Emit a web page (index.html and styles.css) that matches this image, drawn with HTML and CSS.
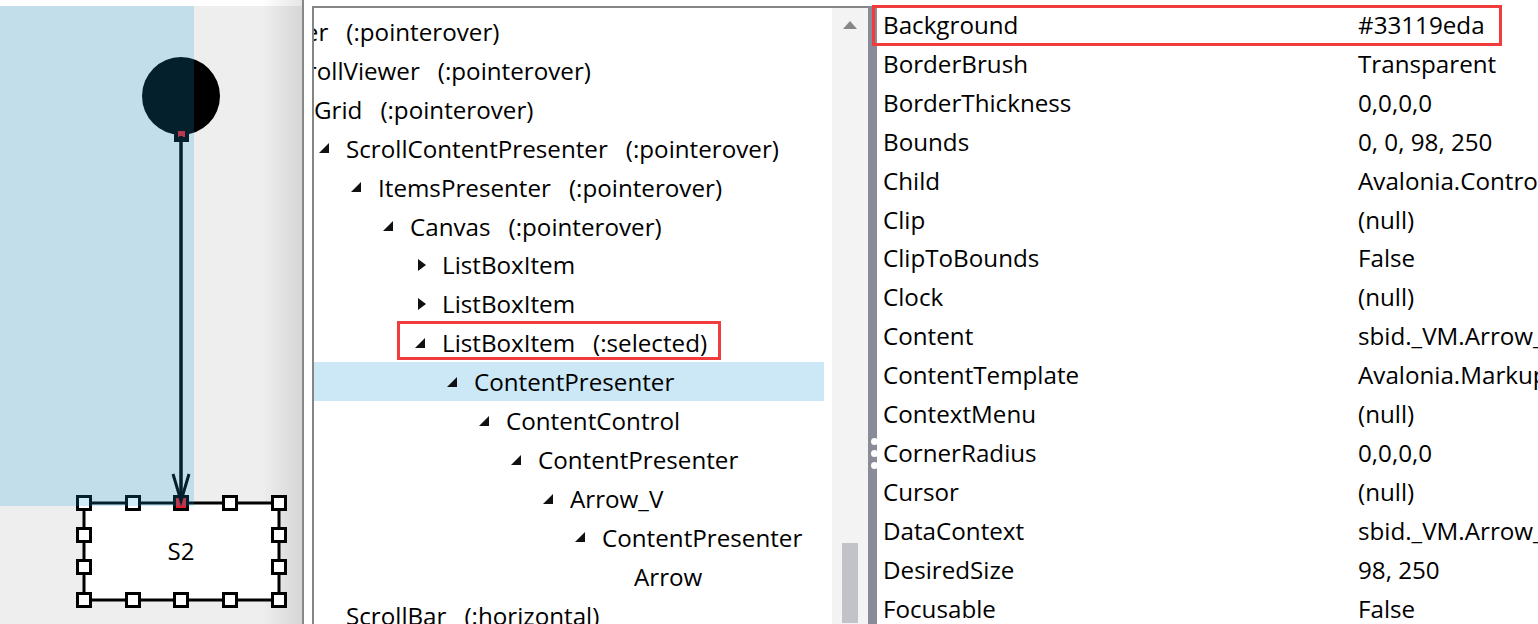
FILE: index.html
```html
<!DOCTYPE html>
<html>
<head>
<meta charset="utf-8">
<title>DevTools</title>
<link rel="stylesheet" href="styles.css">
</head>
<body>
<div class="app">
  <div class="canvas-pane">
    <svg class="canvas" width="302" height="624" viewBox="0 0 302 624">
      <defs>
        <linearGradient id="shade" x1="0" x2="1" y1="0" y2="0">
          <stop offset="0" stop-color="#000" stop-opacity="0"/>
          <stop offset="1" stop-color="#000" stop-opacity="0.1"/>
        </linearGradient>
      </defs>
      <rect x="0" y="0" width="302" height="6" fill="#ffffff"/>
      <rect x="0" y="6" width="302" height="618" fill="#eeeeee"/>
      <rect x="262" y="0" width="40" height="624" fill="url(#shade)"/>
      <circle cx="181" cy="96" r="39" fill="#000"/>
      <rect x="174" y="130" width="15" height="12" fill="#000"/>
      <rect x="178" y="131" width="7" height="6" fill="#e0202c"/>
      <line x1="181" y1="136" x2="181" y2="500" stroke="#000" stroke-width="3.5"/>
      <rect x="84" y="503" width="195" height="97" fill="#ffffff" stroke="#000" stroke-width="3"/>
      <g fill="#ffffff" stroke="#000" stroke-width="3">
        <rect x="77.5" y="496.5" width="13" height="13"/>
        <rect x="126.5" y="496.5" width="13" height="13"/>
        <rect x="174.5" y="496.5" width="13" height="13" fill="#e0202c"/>
        <rect x="223.5" y="496.5" width="13" height="13"/>
        <rect x="272.5" y="496.5" width="13" height="13"/>
        <rect x="77.5" y="528.5" width="13" height="13"/>
        <rect x="272.5" y="528.5" width="13" height="13"/>
        <rect x="77.5" y="560.5" width="13" height="13"/>
        <rect x="272.5" y="560.5" width="13" height="13"/>
        <rect x="77.5" y="593.5" width="13" height="13"/>
        <rect x="126.5" y="593.5" width="13" height="13"/>
        <rect x="174.5" y="593.5" width="13" height="13"/>
        <rect x="223.5" y="593.5" width="13" height="13"/>
        <rect x="272.5" y="593.5" width="13" height="13"/>
      </g>
      <polyline points="173,474 181,501 189,474" fill="none" stroke="#000" stroke-width="3"/>
      <text x="181" y="560" text-anchor="middle" class="node-label">S2</text>
      <rect x="0" y="6" width="194" height="500" fill="#119eda" fill-opacity="0.2"/>
    </svg>
  </div>
  <div class="divider"></div>
  <div class="tree-pane">
    <div class="tree-view">
      <div class="tree-content">
        <div class="row l0"><span class="node"><span class="exp"><svg class="tri" width="10" height="10" viewBox="0 0 10 10"><path d="M10 0L10 10L0 10Z"/></svg></span><span class="name">Border</span><span class="pc">(:pointerover)</span></span></div>
        <div class="row l1"><span class="node"><span class="exp"><svg class="tri" width="10" height="10" viewBox="0 0 10 10"><path d="M10 0L10 10L0 10Z"/></svg></span><span class="name">ScrollViewer</span><span class="pc">(:pointerover)</span></span></div>
        <div class="row l2"><span class="node"><span class="exp"><svg class="tri" width="10" height="10" viewBox="0 0 10 10"><path d="M10 0L10 10L0 10Z"/></svg></span><span class="name">Grid</span><span class="pc">(:pointerover)</span></span></div>
        <div class="row l3"><span class="node"><span class="exp"><svg class="tri" width="10" height="10" viewBox="0 0 10 10"><path d="M10 0L10 10L0 10Z"/></svg></span><span class="name">ScrollContentPresenter</span><span class="pc">(:pointerover)</span></span></div>
        <div class="row l4"><span class="node"><span class="exp"><svg class="tri" width="10" height="10" viewBox="0 0 10 10"><path d="M10 0L10 10L0 10Z"/></svg></span><span class="name">ItemsPresenter</span><span class="pc">(:pointerover)</span></span></div>
        <div class="row l5"><span class="node"><span class="exp"><svg class="tri" width="10" height="10" viewBox="0 0 10 10"><path d="M10 0L10 10L0 10Z"/></svg></span><span class="name">Canvas</span><span class="pc">(:pointerover)</span></span></div>
        <div class="row l6"><span class="node"><span class="exp"><svg class="tri-r" width="8" height="12" viewBox="0 0 8 12"><path d="M0 0L8 6L0 12Z"/></svg></span><span class="name">ListBoxItem</span></span></div>
        <div class="row l6"><span class="node"><span class="exp"><svg class="tri-r" width="8" height="12" viewBox="0 0 8 12"><path d="M0 0L8 6L0 12Z"/></svg></span><span class="name">ListBoxItem</span></span></div>
        <div class="row l6"><span class="node"><span class="exp"><svg class="tri" width="10" height="10" viewBox="0 0 10 10"><path d="M10 0L10 10L0 10Z"/></svg></span><span class="name">ListBoxItem</span><span class="pc">(:selected)</span><span class="mark tree-mark"></span></span></div>
        <div class="row l7 selected"><span class="node"><span class="exp"><svg class="tri" width="10" height="10" viewBox="0 0 10 10"><path d="M10 0L10 10L0 10Z"/></svg></span><span class="name">ContentPresenter</span></span></div>
        <div class="row l8"><span class="node"><span class="exp"><svg class="tri" width="10" height="10" viewBox="0 0 10 10"><path d="M10 0L10 10L0 10Z"/></svg></span><span class="name">ContentControl</span></span></div>
        <div class="row l9"><span class="node"><span class="exp"><svg class="tri" width="10" height="10" viewBox="0 0 10 10"><path d="M10 0L10 10L0 10Z"/></svg></span><span class="name">ContentPresenter</span></span></div>
        <div class="row l10"><span class="node"><span class="exp"><svg class="tri" width="10" height="10" viewBox="0 0 10 10"><path d="M10 0L10 10L0 10Z"/></svg></span><span class="name">Arrow_V</span></span></div>
        <div class="row l11"><span class="node"><span class="exp"><svg class="tri" width="10" height="10" viewBox="0 0 10 10"><path d="M10 0L10 10L0 10Z"/></svg></span><span class="name">ContentPresenter</span></span></div>
        <div class="row l12"><span class="node"><span class="exp"></span><span class="name">Arrow</span></span></div>
        <div class="row l3"><span class="node"><span class="exp"></span><span class="name">ScrollBar</span><span class="pc">(:horizontal)</span></span></div>
      </div>
    </div>
    <div class="vscroll">
      <svg class="up" width="14" height="8" viewBox="0 0 14 8"><path d="M7 0L14 8L0 8Z"/></svg>
      <div class="thumb"></div>
    </div>
  </div>
  <div class="splitter">
    <span class="dot d1"></span><span class="dot d2"></span><span class="dot d3"></span>
  </div>
  <div class="props">
    <div class="prop"><span class="pname">Background</span><span class="pval">#33119eda</span></div>
    <div class="prop"><span class="pname">BorderBrush</span><span class="pval">Transparent</span></div>
    <div class="prop"><span class="pname">BorderThickness</span><span class="pval">0,0,0,0</span></div>
    <div class="prop"><span class="pname">Bounds</span><span class="pval">0, 0, 98, 250</span></div>
    <div class="prop"><span class="pname">Child</span><span class="pval">Avalonia.Controls.ContentControl</span></div>
    <div class="prop"><span class="pname">Clip</span><span class="pval">(null)</span></div>
    <div class="prop"><span class="pname">ClipToBounds</span><span class="pval">False</span></div>
    <div class="prop"><span class="pname">Clock</span><span class="pval">(null)</span></div>
    <div class="prop"><span class="pname">Content</span><span class="pval">sbid._VM.Arrow_V</span></div>
    <div class="prop"><span class="pname">ContentTemplate</span><span class="pval">Avalonia.Markup.Xaml.Templates.DataTemplate</span></div>
    <div class="prop"><span class="pname">ContextMenu</span><span class="pval">(null)</span></div>
    <div class="prop"><span class="pname">CornerRadius</span><span class="pval">0,0,0,0</span></div>
    <div class="prop"><span class="pname">Cursor</span><span class="pval">(null)</span></div>
    <div class="prop"><span class="pname">DataContext</span><span class="pval">sbid._VM.Arrow_V</span></div>
    <div class="prop"><span class="pname">DesiredSize</span><span class="pval">98, 250</span></div>
    <div class="prop"><span class="pname">Focusable</span><span class="pval">False</span></div>
    <div class="mark prop-mark"></div>
  </div>
</div>
</body>
</html>
```

FILE: styles.css
```css
html, body {
  margin: 0;
  padding: 0;
  background: #ffffff;
}
body {
  width: 1538px;
  height: 624px;
  overflow: hidden;
  font-family: "Open Sans", "Noto Sans", sans-serif;
  font-size: 24.2px;
  color: #000;
}
.app {
  display: flex;
  height: 624px;
  width: 1538px;
}
.canvas-pane {
  flex: 0 0 302px;
  height: 624px;
}
.canvas {
  display: block;
}
.node-label {
  font-family: "Open Sans", "Noto Sans", sans-serif;
  font-size: 24px;
  fill: #000;
}
.divider {
  flex: 0 0 2px;
  background: #888888;
}
.tree-pane {
  flex: 0 0 556px;
  margin-left: 8px;
  margin-top: 6px;
  border-left: 2px solid #858585;
  border-top: 2px solid #858585;
  box-sizing: border-box;
  display: flex;
  height: 618px;
}
.tree-view {
  flex: 1 1 auto;
  overflow: hidden;
  background: #ffffff;
}
.tree-content {
  margin-left: -92px;
  width: calc(100% + 84px);
  padding-top: 4px;
}
.row {
  height: 38.93px;
  display: flex;
  align-items: center;
  white-space: nowrap;
  box-sizing: border-box;
}
.row.selected {
  background: #cce8f6;
}
.node {
  position: relative;
  display: flex;
  align-items: center;
  height: 38.93px;
}
.exp {
  width: 28px;
  height: 38px;
  display: flex;
  align-items: center;
  flex: 0 0 28px;
}
.tri {
  margin-left: 1px;
  fill: #111;
}
.tri-r {
  margin-left: 4px;
  fill: #111;
}
.pc {
  margin-left: 18px;
}
.l0 { padding-left: 0; }
.l1 { padding-left: 32px; }
.l2 { padding-left: 64px; }
.l3 { padding-left: 96px; }
.l4 { padding-left: 128px; }
.l5 { padding-left: 160px; }
.l6 { padding-left: 192px; }
.l7 { padding-left: 224px; }
.l8 { padding-left: 256px; }
.l9 { padding-left: 288px; }
.l10 { padding-left: 320px; }
.l11 { padding-left: 352px; }
.l12 { padding-left: 384px; }
.mark {
  position: absolute;
  border: 3px solid #f03c3c;
  box-sizing: border-box;
}
.tree-mark {
  left: -17px;
  right: -14px;
  top: -2px;
  height: 39px;
}
.vscroll {
  flex: 0 0 36px;
  background: #f3f3f3;
  display: flex;
  flex-direction: column;
  align-items: center;
}
.up {
  flex: 0 0 auto;
  margin-top: 13px;
  fill: #868686;
}
.thumb {
  flex: 0 0 auto;
  margin-top: 514px;
  width: 16px;
  height: 80px;
  background: #c2c3c9;
}
.splitter {
  flex: 0 0 9px;
  margin-top: 6px;
  background: #8a8b99;
  position: relative;
}
.dot {
  position: absolute;
  left: 3px;
  width: 7px;
  height: 7px;
  border-radius: 50%;
  background: #ffffff;
}
.d1 { top: 432px; }
.d2 { top: 444px; }
.d3 { top: 456px; }
.props {
  flex: 1 1 auto;
  position: relative;
  padding-top: 5px;
  white-space: nowrap;
  min-width: 0;
}
.prop {
  display: flex;
  align-items: center;
  height: 38.93px;
  padding-left: 6px;
}
.pname {
  flex: 0 0 475px;
}
.pval {
  flex: 0 0 auto;
}
.prop-mark {
  left: -5px;
  top: 5px;
  width: 630px;
  height: 41px;
}
```
